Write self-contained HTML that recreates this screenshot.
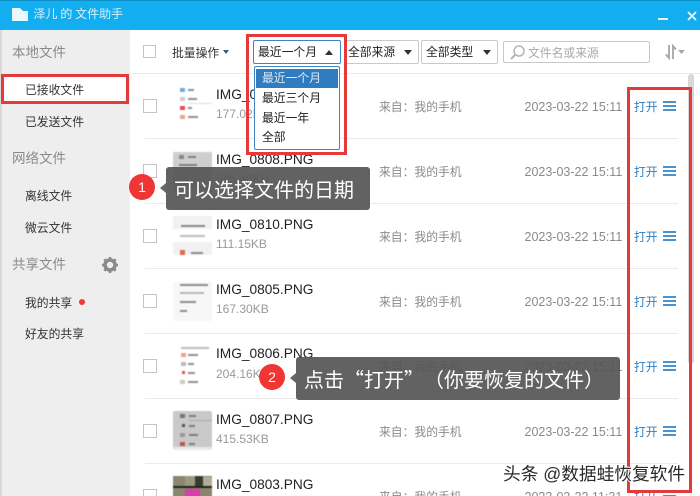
<!DOCTYPE html>
<html lang="zh"><head><meta charset="utf-8">
<style>
*{box-sizing:border-box}
html,body{margin:0;padding:0;width:700px;height:496px;overflow:hidden;background:#fff;font-family:"Liberation Sans","Noto Sans CJK SC",sans-serif}
#w{position:relative;width:700px;height:496px;overflow:hidden;background:#fff}
.a{position:absolute;white-space:nowrap}
.side{font-size:13.5px;color:#8a8a8a;left:12px;margin-top:1px}
.sub{font-size:11.8px;color:#333;left:25px;margin-top:1px}
.cb{position:absolute;left:143px;width:14px;height:14px;border:1px solid #c4c4c4;background:#fff}
.name{position:absolute;left:216px;font-size:13.7px;line-height:18px;color:#222;margin-top:-1px}
.size{position:absolute;left:216px;font-size:12px;line-height:16px;color:#999}
.src{position:absolute;left:379px;font-size:11.8px;line-height:16px;color:#8a8a8a;margin-top:1px}
.time{position:absolute;left:524.5px;font-size:12.5px;line-height:16px;color:#8a8a8a;margin-top:1px}
.open{position:absolute;left:634px;font-size:11.8px;line-height:16px;color:#2f7fc0;margin-top:1px}
.bars{position:absolute;left:663px;width:13px;height:10px;border-top:2px solid #4a93cf;border-bottom:2px solid #4a93cf}
.bars:after{content:"";position:absolute;left:0;right:0;top:2px;height:2px;background:#4a93cf}
.sep{position:absolute;left:145px;width:533px;height:1px;background:#ebebeb}
.sel{position:absolute;top:40px;height:24px;border:1px solid #c9c9c9;border-radius:2px;background:#fff;font-size:11.8px;line-height:23px;color:#222;padding-left:4px;white-space:nowrap;overflow:hidden}
.tri{position:absolute;width:0;height:0;border-left:4px solid transparent;border-right:4px solid transparent}
.thumb{position:absolute;left:173px;width:39px;height:39px;overflow:hidden;filter:blur(.4px)}
.l{position:absolute;height:2px;background:#555;opacity:.65}
.ic{position:absolute;width:5px;height:4px}
.red{position:absolute;border:3px solid #e53a3a;background:transparent}
.tip{position:absolute;background:rgba(85,85,85,.92);border-radius:3px;color:#fff;height:43px;font-family:"Noto Sans CJK SC","Liberation Sans",sans-serif;font-size:20px;line-height:43px;white-space:nowrap;text-spacing-trim:space-all}
.arrow{position:absolute;width:0;height:0;border-top:5px solid transparent;border-bottom:5px solid transparent;border-right:6px solid #666}
.dot{position:absolute;width:26px;height:26px;border-radius:50%;background:#f03535;color:#fff;text-align:center;font-size:14px;line-height:26px}
</style></head><body><div id="w">

<!-- title bar -->
<div class="a" style="left:0;top:0;width:700px;height:30px;background:#12aef0"></div>
<div class="a" style="left:0;top:0;width:700px;height:1px;background:#0f8fc8"></div>
<svg class="a" style="left:12px;top:8px" width="16" height="13" viewBox="0 0 16 13"><path d="M0 0h8l3 3h5v10H0z" fill="#eaf7fd"/></svg>
<div class="a" style="left:33.5px;top:5px;font-size:12px;line-height:18px;color:#d7f0fb;word-spacing:-.5px">泽儿 的 文件助手</div>
<div class="a" style="left:658px;top:18px;width:10px;height:2px;background:#e4f5fc"></div>
<svg class="a" style="left:687px;top:11px" width="11" height="11" viewBox="0 0 11 11"><path d="M1 1l8 8M9 1l-8 8" stroke="#f0faff" stroke-width="1.800" fill="none"/></svg>

<!-- sidebar -->
<div class="a" style="left:0;top:30px;width:130px;height:466px;background:#eeeeee"></div>
<div class="a" style="left:0;top:30px;width:2px;height:466px;background:#d9d9d9"></div>
<div class="a side" style="top:43px;line-height:18px">本地文件</div>
<div class="a" style="left:2px;top:75px;width:126px;height:28px;background:#fff"></div>
<div class="a sub" style="top:81px;line-height:17px">已接收文件</div>
<div class="a sub" style="top:113px;line-height:17px">已发送文件</div>
<div class="a side" style="top:149px;line-height:18px">网络文件</div>
<div class="a sub" style="top:187px;line-height:17px">离线文件</div>
<div class="a sub" style="top:219px;line-height:17px">微云文件</div>
<div class="a side" style="top:255px;line-height:18px">共享文件</div>
<svg class="a" style="left:101px;top:256px" width="18" height="18" viewBox="0 0 18 18"><circle cx="9" cy="9" r="5" fill="none" stroke="#8a8a8a" stroke-width="3.500"/><path d="M9 1v3M9 14v3M1 9h3M14 9h3M3.300 3.300l2.200 2.200M12.500 12.500l2.200 2.200M14.700 3.300l-2.200 2.200M5.500 12.500l-2.200 2.200" stroke="#8a8a8a" stroke-width="2.600"/></svg>
<div class="a sub" style="top:294px;line-height:17px">我的共享</div>
<div class="a" style="left:79px;top:299px;width:6px;height:6px;border-radius:50%;background:#ea3a3a"></div>
<div class="a sub" style="top:325px;line-height:17px">好友的共享</div>

<!-- toolbar -->
<div class="cb" style="top:45px;width:13px;height:13px"></div>
<div class="a" style="left:172px;top:45px;font-size:11.8px;line-height:17px;color:#333">批量操作</div>
<div class="tri" style="left:223px;top:50px;border-top:4px solid #2f5f88;border-left-width:3.500px;border-right-width:3.500px"></div>

<div class="sel" style="left:253px;width:88px;border-color:#3c86c4;padding-left:4px;height:24px;top:40px">最近一个月</div>
<div class="tri" style="left:325px;top:50px;border-bottom:5px solid #333"></div>

<div class="sel" style="left:345px;width:74px;padding-left:2px">全部来源</div>
<div class="tri" style="left:404px;top:50px;border-top:5px solid #333"></div>
<div class="sel" style="left:421px;width:77px;padding-left:4px">全部类型</div>
<div class="tri" style="left:483px;top:50px;border-top:5px solid #333"></div>

<div class="a" style="left:503px;top:41px;width:147px;height:22px;border:1px solid #c9c9c9;border-radius:2px"></div>
<svg class="a" style="left:509px;top:44px" width="17" height="17" viewBox="0 0 17 17"><circle cx="10" cy="7" r="5" fill="none" stroke="#b5b5b5" stroke-width="1.500"/><path d="M6.500 10.500L2 15" stroke="#b5b5b5" stroke-width="2"/></svg>
<div class="a" style="left:528px;top:45px;font-size:11.8px;line-height:17px;color:#a8a8a8">文件名或来源</div>
<svg class="a" style="left:665px;top:44px" width="24" height="16" viewBox="0 0 24 16"><path d="M4 1v13L1 10.500M8 15V2l3 3.500" fill="none" stroke="#a5a5a5" stroke-width="1.800"/><path d="M13 6h7l-3.500 4z" fill="#a5a5a5"/></svg>

<div class="sep" style="top:73px;left:130px;width:570px"></div>

<!-- separators -->
<div class="sep" style="top:138px"></div>
<div class="sep" style="top:203px"></div>
<div class="sep" style="top:268px"></div>
<div class="sep" style="top:333px"></div>
<div class="sep" style="top:398px"></div>
<div class="sep" style="top:463px"></div>

<!-- rows -->
<div class="cb" style="top:99px"></div>
<div class="thumb" style="top:86px;background:#fff"><div class="ic" style="left:7px;top:2px;background:#6aaee0"></div><div class="l" style="left:15px;top:3px;width:6px"></div><div class="ic" style="left:7px;top:11px;background:#ccc"></div><div class="l" style="left:15px;top:12px;width:9px"></div><div class="a" style="left:15px;top:17px;width:24px;height:1px;background:#ddd"></div><div class="ic" style="left:7px;top:20px;background:#e25050"></div><div class="l" style="left:15px;top:21px;width:4px"></div><div class="ic" style="left:7px;top:29px;background:#eda58a"></div><div class="l" style="left:15px;top:30px;width:10px"></div></div>
<div class="name" style="top:87px">IMG_0809.PNG</div><div class="size" style="top:106px">177.02KB</div>
<div class="src" style="top:98px">来自：我的手机</div><div class="time" style="top:98px">2023-03-22 15:11</div><div class="open" style="top:98px">打开</div><div class="bars" style="top:101px"></div>

<div class="cb" style="top:164px"></div>
<div class="thumb" style="top:152px;background:#cfcfcf"><div class="ic" style="left:6px;top:3px;background:#888"></div><div class="l" style="left:15px;top:4px;width:8px"></div><div class="l" style="left:6px;top:12px;width:18px"></div></div>
<div class="name" style="top:152px">IMG_0808.PNG</div><div class="size" style="top:171px">345.46KB</div>
<div class="src" style="top:163px">来自：我的手机</div><div class="time" style="top:163px">2023-03-22 15:11</div><div class="open" style="top:163px">打开</div><div class="bars" style="top:166px"></div>

<div class="cb" style="top:229px"></div>
<div class="thumb" style="top:216px;background:#f1f1f1"><div class="a" style="left:0;top:13px;width:39px;height:13px;background:#fff"></div><div class="l" style="left:8px;top:9px;width:24px"></div><div class="l" style="left:7px;top:19px;width:25px;opacity:.4"></div><div class="ic" style="left:7px;top:34px;width:5px;height:5px;background:#e2694e"></div><div class="l" style="left:18px;top:36px;width:12px"></div></div>
<div class="name" style="top:217px">IMG_0810.PNG</div><div class="size" style="top:236px">111.15KB</div>
<div class="src" style="top:228px">来自：我的手机</div><div class="time" style="top:228px">2023-03-22 15:11</div><div class="open" style="top:228px">打开</div><div class="bars" style="top:231px"></div>

<div class="cb" style="top:294px"></div>
<div class="thumb" style="top:282px;background:#f7f7f7"><div class="l" style="left:7px;top:2px;width:28px"></div><div class="l" style="left:7px;top:10px;width:24px;opacity:.4"></div><div class="l" style="left:7px;top:19px;width:16px"></div><div class="l" style="left:7px;top:28px;width:7px"></div></div>
<div class="name" style="top:282px">IMG_0805.PNG</div><div class="size" style="top:301px">167.30KB</div>
<div class="src" style="top:293px">来自：我的手机</div><div class="time" style="top:293px">2023-03-22 15:11</div><div class="open" style="top:293px">打开</div><div class="bars" style="top:296px"></div>

<div class="cb" style="top:359px"></div>
<div class="thumb" style="top:346px;background:#fff"><div class="l" style="left:8px;top:1px;width:28px;opacity:.4"></div><div class="ic" style="left:8px;top:7px;background:#eda58a"></div><div class="l" style="left:15px;top:8px;width:10px"></div><div class="ic" style="left:8px;top:16px;background:#bbb"></div><div class="l" style="left:15px;top:17px;width:6px"></div><div class="ic" style="left:9px;top:25px;width:3px;height:3px;background:#e25050"></div><div class="l" style="left:15px;top:26px;width:7px"></div><div class="ic" style="left:7px;top:34px;background:#ccc"></div><div class="l" style="left:15px;top:35px;width:10px"></div></div>
<div class="name" style="top:346px">IMG_0806.PNG</div><div class="size" style="top:366px">204.16KB</div>
<div class="src" style="top:358px">来自：我的手机</div><div class="time" style="top:358px">2023-03-22 15:11</div><div class="open" style="top:358px">打开</div><div class="bars" style="top:361px"></div>

<div class="cb" style="top:424px"></div>
<div class="thumb" style="top:411px;background:#c9c9c9;border-radius:2px"><div class="ic" style="left:7px;top:3px;background:#777"></div><div class="l" style="left:16px;top:4px;width:7px"></div><div class="a" style="left:16px;top:9px;width:23px;height:1px;background:#aaa"></div><div class="ic" style="left:9px;top:13px;width:3px;height:3px;background:#555"></div><div class="l" style="left:16px;top:14px;width:6px"></div><div class="ic" style="left:7px;top:22px;background:#999"></div><div class="l" style="left:16px;top:23px;width:9px"></div><div class="ic" style="left:7px;top:31px;background:#b55"></div><div class="l" style="left:16px;top:32px;width:6px"></div><div class="a" style="left:0;top:36px;width:39px;height:3px;background:#e8e8e8"></div></div>
<div class="name" style="top:412px">IMG_0807.PNG</div><div class="size" style="top:431px">415.53KB</div>
<div class="src" style="top:423px">来自：我的手机</div><div class="time" style="top:423px">2023-03-22 15:11</div><div class="open" style="top:423px">打开</div><div class="bars" style="top:426px"></div>

<div class="cb" style="top:489px"></div>
<div class="thumb" style="top:476px;background:#8b8670"><div class="a" style="left:12px;top:0;width:14px;height:10px;background:#9b9a80"></div><div class="a" style="left:22px;top:0;width:8px;height:10px;background:#3a3a30"></div><div class="a" style="left:30px;top:1px;width:9px;height:9px;background:#b0ad98"></div><div class="a" style="left:0;top:10px;width:39px;height:2px;background:#222"></div><div class="a" style="left:12px;top:13px;width:15px;height:8px;background:#d83fa8"></div></div>
<div class="name" style="top:477px">IMG_0803.PNG</div>
<div class="src" style="top:488px">来自：我的手机</div><div class="time" style="top:488px">2023-03-22 11:31</div><div class="open" style="top:488px">打开</div><div class="bars" style="top:491px"></div>

<!-- scrollbar -->
<div class="a" style="left:688px;top:74px;width:6px;height:290px;background:#d8d8d8;border-radius:3px"></div>

<!-- dropdown -->
<div class="a" style="left:254px;top:66px;width:86px;height:84px;background:#fff;border:1px solid #3c86c4;border-radius:2px"></div>
<div class="a" style="left:256px;top:69px;width:82px;height:19px;background:#2f7cc1"></div>
<div class="a" style="left:262px;top:69px;font-size:11.8px;line-height:18px;color:#dcebf7">最近一个月</div>
<div class="a" style="left:262px;top:89px;font-size:11.8px;line-height:18px;color:#222">最近三个月</div>
<div class="a" style="left:262px;top:109px;font-size:11.8px;line-height:18px;color:#222">最近一年</div>
<div class="a" style="left:262px;top:128px;font-size:11.8px;line-height:18px;color:#222">全部</div>

<!-- tips -->
<div class="tip" style="left:166px;top:167px;width:204px;padding-left:8px">可以选择文件的日期</div>
<div class="arrow" style="left:160px;top:183px"></div>
<div class="dot" style="left:129px;top:174px">1</div>
<div class="tip" style="left:296px;top:357px;width:324px;padding-left:8px">点击“打开”（你要恢复的文件）</div>
<div class="arrow" style="left:290px;top:373px"></div>
<div class="dot" style="left:259px;top:364px">2</div>

<!-- red boxes -->
<div class="red" style="left:246px;top:34px;width:101px;height:121px"></div>
<div class="red" style="left:1px;top:74px;width:128px;height:30px"></div>
<div class="red" style="left:627px;top:87px;width:65px;height:406px"></div>

<!-- watermark -->
<div class="a" style="left:503px;top:463px;font-size:17.7px;line-height:22px;color:#2a2a2a;text-shadow:-1px 0 #fff,1px 0 #fff,0 -1px #fff,0 1px #fff">头条 @数据蛙恢复软件</div>
</div></body></html>
